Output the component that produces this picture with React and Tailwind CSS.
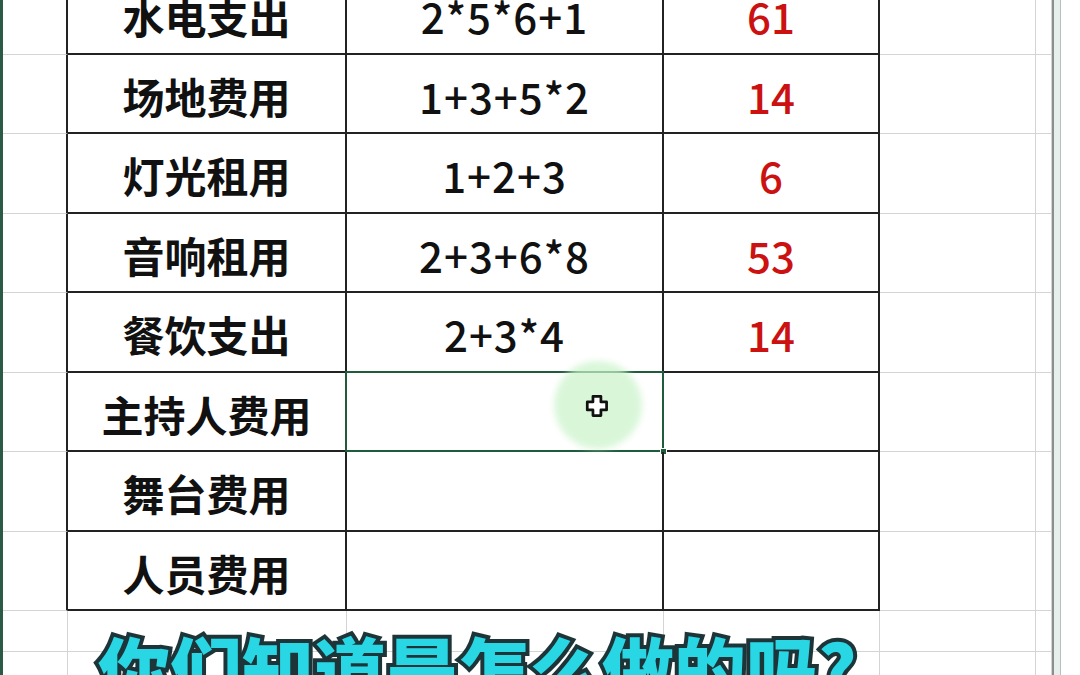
import React from "react";

const rows = [
  { label: "水电支出", formula: "2*5*6+1", result: "61" },
  { label: "场地费用", formula: "1+3+5*2", result: "14" },
  { label: "灯光租用", formula: "1+2+3", result: "6" },
  { label: "音响租用", formula: "2+3+6*8", result: "53" },
  { label: "餐饮支出", formula: "2+3*4", result: "14" },
  { label: "主持人费用", formula: "", result: "", selected: true },
  { label: "舞台费用", formula: "", result: "" },
  { label: "人员费用", formula: "", result: "" },
];

const cols = "grid shrink-0 grid-cols-[65px_279px_317px_216px_156px_16px]";
const cjk = { fontFamily: '"Noto Sans CJK SC", "Noto Sans", sans-serif' };

function FillerRow() {
  return (
    <div className={`${cols} h-[41px]`}>
      {[0, 1, 2, 3, 4, 5].map((i) => (
        <div key={i} className="border-r border-b border-[#d4d4d4]" />
      ))}
    </div>
  );
}

function SelectedOverlay() {
  return (
    <>
      <div className="absolute -top-[2px] -left-[2px] -right-[2px] -bottom-[2px] border-2 border-[#1f5c3e] pointer-events-none" />
      <div className="absolute -bottom-[5px] -right-[5px] w-[7px] h-[7px] bg-[#1f5c3e] border border-white" />
      <div className="absolute left-[207px] top-[-12px] w-[88px] h-[88px] rounded-full bg-[#c9f3c9] opacity-70 blur-[3px]" />
      <svg
        className="absolute left-[238px] top-[21px]"
        width="25"
        height="25"
        viewBox="0 0 22 22"
      >
        <path
          d="M7 2h7v5h5v7h-5v5H7v-5H2V7h5z"
          fill="#fff"
          stroke="#111"
          strokeWidth="2.4"
          strokeLinejoin="round"
        />
      </svg>
    </>
  );
}

export default function App() {
  return (
    <div className="relative w-[1080px] h-[675px] overflow-hidden bg-white flex">
      <div className="w-[3px] h-full bg-[#2d5a47]" />
      <div className="flex flex-col -mt-[25px]">
        {rows.map((row, i) => (
          <div key={i} className={`${cols} h-[79.5px]`}>
            <div className="border-r-2 border-r-[#222] border-b border-b-[#d4d4d4]" />
            <div
              className="border-r-2 border-b-2 border-[#222] flex items-center justify-center text-[42px] font-bold text-[#111] pt-[4px]"
              style={cjk}
            >
              {row.label}
            </div>
            <div
              className="relative border-r-2 border-b-2 border-[#222] flex items-center justify-center text-[42px] font-medium text-[#111] tracking-[1px] pt-[4px]"
              style={cjk}
            >
              {row.formula}
              {row.selected && <SelectedOverlay />}
            </div>
            <div
              className="border-r-2 border-b-2 border-[#222] flex items-center justify-center text-[42px] font-medium text-[#cc1111] pt-[4px]"
              style={cjk}
            >
              {row.result}
            </div>
            <div className="border-r border-b border-[#d4d4d4]" />
            <div className="border-r border-b border-[#d4d4d4]" />
          </div>
        ))}
        <FillerRow />
        <FillerRow />
        <FillerRow />
      </div>
      <div className="w-[9px] h-full shrink-0 border-l-2 border-l-[#8a8f8d] border-r border-r-[#b9bfbd] bg-[#e6efec]" />
      <div className="flex-1 bg-white" />

      <div
        className="absolute left-[98px] top-[631px] whitespace-nowrap text-[72px] leading-none font-black text-[#29d6e4] [-webkit-text-stroke:8px_#1d3538] [paint-order:stroke_fill]"
        style={cjk}
      >
        你们知道是怎么做的吗?
      </div>
    </div>
  );
}
